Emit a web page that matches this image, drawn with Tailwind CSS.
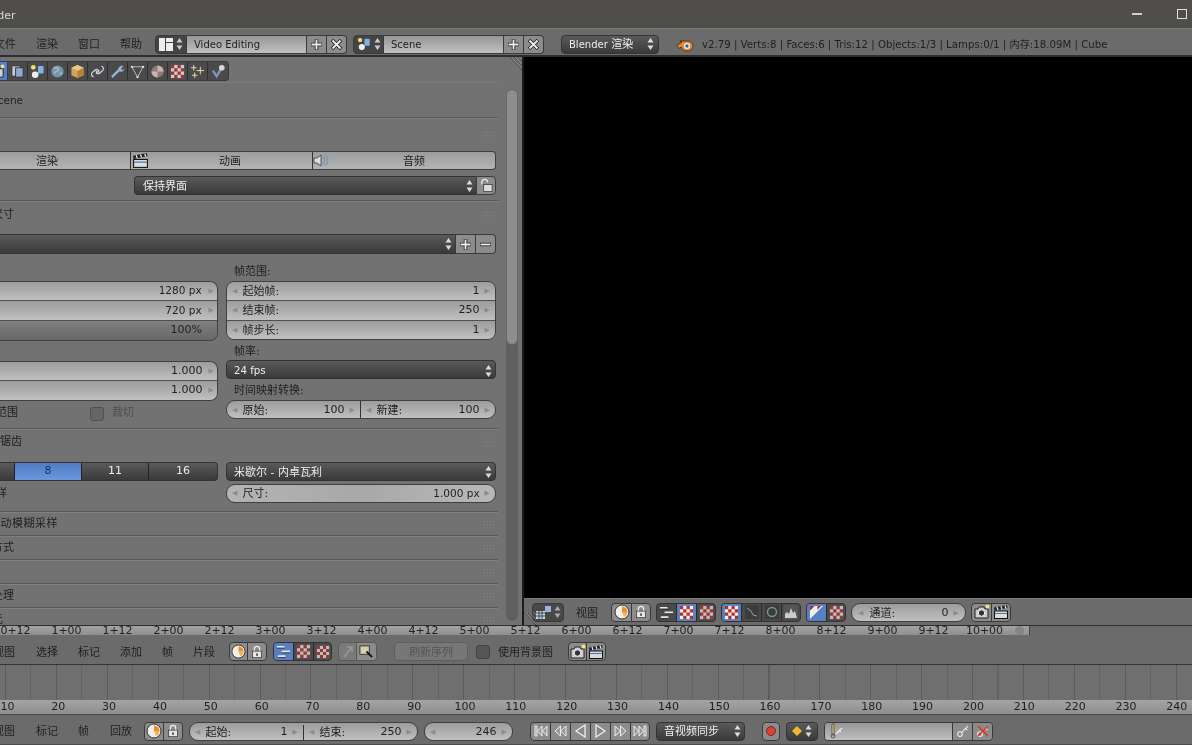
<!DOCTYPE html>
<html lang="en">
<head>
<meta charset="UTF-8" />
<title>Blender</title>
<script src="https://cdn.jsdelivr.net/npm/@tailwindcss/browser@4"></script>
</head>
<body class="bg-black">

<!-- icon sheet -->
<svg width="0" height="0" class="absolute">
  <symbol id="checker" viewBox="0 0 16 16"><rect x="1" y="1" width="14" height="14" fill="#eee"/><path fill="#b5302a" d="M1 1h3.500v3.500H1zM8 1h3.500v3.500H8zM4.500 4.500H8V8H4.500zM11.500 4.500H15V8h-3.500zM1 8h3.500v3.500H1zM8 8h3.500v3.500H8zM4.500 11.500H8V15H4.500zM11.500 11.500H15V15h-3.500z"/></symbol>
  <symbol id="pie" viewBox="0 0 16 16"><circle cx="8" cy="8" r="7" fill="#f2efe6" stroke="#333" stroke-width="1"/><path d="M8 8V2.500A5.500 5.500 0 0 1 13.500 8z" fill="#e8912c"/><path d="M8 8h5.500A5.500 5.500 0 0 1 10 13z" fill="#f0b060"/></symbol>
  <symbol id="lock" viewBox="0 0 16 16"><path d="M5 7V4.500a3 3 0 0 1 6 0V7" fill="none" stroke="#eee" stroke-width="1.500"/><rect x="3" y="7" width="10" height="7.500" fill="#e6e6e6" stroke="#333" stroke-width=".8"/><rect x="7" y="9.500" width="2" height="3" fill="#555"/></symbol>
  <symbol id="seqbars" viewBox="0 0 16 16"><path fill="#e8e8e8" d="M1 2h8v2H1zM6 7h9v2H6zM2 12h8v2H2z"/><path fill="#222" d="M1 4h8v.8H1zM6 9h9v.8H6zM2 14h8v.8H2z"/></symbol>
  <symbol id="camera" viewBox="0 0 16 16"><path d="M1 5h3l1-2h5l1 2h3v9H1z" fill="#cfcfcf" stroke="#222" stroke-width="1"/><circle cx="7.500" cy="9" r="3.200" fill="#333" stroke="#eee" stroke-width="1"/><circle cx="13.500" cy="2.500" r="2" fill="#f6e27a"/></symbol>
  <symbol id="clapper" viewBox="0 0 16 16"><rect x="1.500" y="7" width="13" height="7.500" fill="#dcdcdc" stroke="#111" stroke-width="1"/><path d="M1 3.500 14 1l.6 3L1.500 6.500z" fill="#222"/><path d="M4 3l1 3M8 2.300l1 3M12 1.500l1 3" stroke="#eee" stroke-width="1.200"/><path d="M2 9.500h12" stroke="#4a78b0"/></symbol>
  <symbol id="sceneico" viewBox="0 0 16 16"><circle cx="3.500" cy="3.500" r="2.500" fill="#e9e36a"/><rect x="8.500" y="2" width="6" height="8" rx="1" fill="#7fb2e8"/><circle cx="5.500" cy="11.500" r="3.500" fill="#eee"/></symbol>
  <symbol id="key" viewBox="0 0 16 16"><circle cx="4.500" cy="11.500" r="2.700" fill="none" stroke="#eee" stroke-width="1.200"/><path d="m6.500 9.500 7-7M11 5l2 2" stroke="#eee" stroke-width="1.200" fill="none"/></symbol>
  <symbol id="hatch" viewBox="0 0 12 13"><path d="M0 0 12 13M4 0l8 8.700M8 0l4 4.300" stroke="#444" stroke-width="1"/><path d="M1 0 12 12M5 0l7 7.600M9 0l3 3.300" stroke="#999" stroke-width=".7"/></symbol>
</svg>

<div class="w-[1192px] h-[745px] overflow-hidden flex flex-col blur-[0.35px] bg-[#727272] text-[11px] text-[#1f1f1f] font-['DejaVu_Sans','Noto_Sans_CJK_SC',sans-serif]">

  <!-- window title -->
  <div class="h-[28px] shrink-0 bg-[#4f4e4b] flex items-center justify-between">
    <span class="-ml-[27px] mt-[5px] text-[11px] text-[#d8d8d8]">Blender</span>
    <div class="flex items-center">
      <div class="w-[10px] h-[2px] bg-[#cfcfcf]"></div>
      <div class="ml-[35px] mr-[5px] w-[10px] h-[10px] border border-[#e0e0e0]"></div>
    </div>
  </div>

  <!-- info header -->
  <div class="h-[29px] shrink-0 pt-[4px] bg-[#6b6b6b] border-t border-[#7c7c7c] border-b-2 border-b-[#2e2e2e] flex items-center">
    <span class="-ml-[6px] w-[22px] mt-[3px]">文件</span>
    <span class="ml-[20px] w-[22px] mt-[3px]">渲染</span>
    <span class="ml-[20px] w-[22px] mt-[3px]">窗口</span>
    <span class="ml-[20px] w-[22px] mt-[3px]">帮助</span>
    <div class="ml-[13px] w-[32px] h-[19px] rounded-l-[4px] border border-[#3a3a3a] bg-[#444] flex items-center justify-center gap-[3px]">
      <svg class="w-[14px] h-[13px]" viewBox="0 0 14 13"><path fill="#eee" d="M0 0h6v13H0zM7 0h7v4H7zM7 5h7v8H7z"/></svg>
      <svg class="w-[7px] h-[12px]" viewBox="0 0 7 12"><path fill="#ccc" d="M3.500 0 6.500 4.500h-6zM3.500 12 .5 7.500h6z"/></svg>
    </div>
    <div class="w-[120px] h-[19px] border-y border-r border-[#3a3a3a] bg-gradient-to-b from-[#969696] to-[#c0c0c0] flex items-center pl-[7px] text-[10px]">Video Editing</div>
    <div class="w-[20px] h-[19px] border-y border-r border-[#3a3a3a] bg-[#8c8c8c] flex items-center justify-center"><svg class="w-[13px] h-[13px]" viewBox="0 0 13 13"><path d="M6.500 1v11M1 6.500h11" stroke="#222" stroke-width="3.500"/><path d="M6.500 1.500v10M1.500 6.500h10" stroke="#eee" stroke-width="1.800"/></svg></div>
    <div class="w-[20px] h-[19px] border-y border-r border-[#3a3a3a] rounded-r-[4px] bg-[#8c8c8c] flex items-center justify-center"><svg class="w-[13px] h-[13px]" viewBox="0 0 13 13"><path d="m2 2 9 9M11 2l-9 9" stroke="#222" stroke-width="3.500"/><path d="m2.500 2.500 8 8M10.500 2.500l-8 8" stroke="#eee" stroke-width="1.800"/></svg></div>

    <div class="ml-[6px] w-[31px] h-[19px] rounded-l-[4px] border border-[#3a3a3a] bg-[#444] flex items-center justify-center gap-[3px]">
      <svg class="w-[14px] h-[14px]"><use href="#sceneico"/></svg>
      <svg class="w-[7px] h-[12px]" viewBox="0 0 7 12"><path fill="#ccc" d="M3.500 0 6.500 4.500h-6zM3.500 12 .5 7.500h6z"/></svg>
    </div>
    <div class="w-[120px] h-[19px] border-y border-r border-[#3a3a3a] bg-gradient-to-b from-[#969696] to-[#c0c0c0] flex items-center pl-[7px] text-[10px]">Scene</div>
    <div class="w-[20px] h-[19px] border-y border-r border-[#3a3a3a] bg-[#8c8c8c] flex items-center justify-center"><svg class="w-[13px] h-[13px]" viewBox="0 0 13 13"><path d="M6.500 1v11M1 6.500h11" stroke="#222" stroke-width="3.500"/><path d="M6.500 1.500v10M1.500 6.500h10" stroke="#eee" stroke-width="1.800"/></svg></div>
    <div class="w-[20px] h-[19px] border-y border-r border-[#3a3a3a] rounded-r-[4px] bg-[#8c8c8c] flex items-center justify-center"><svg class="w-[13px] h-[13px]" viewBox="0 0 13 13"><path d="m2 2 9 9M11 2l-9 9" stroke="#222" stroke-width="3.500"/><path d="m2.500 2.500 8 8M10.500 2.500l-8 8" stroke="#eee" stroke-width="1.800"/></svg></div>

    <div class="ml-[17px] w-[98px] h-[19px] rounded-[4px] border border-[#333] bg-gradient-to-b from-[#5a5a5a] to-[#3a3a3a] flex items-center justify-between pl-[7px] pr-[4px] text-[#eee]"><span class="mt-[2px]"><span class="text-[10px]">Blender</span> 渲染</span>
      <svg class="w-[7px] h-[12px]" viewBox="0 0 7 12"><path fill="#ddd" d="M3.500 0 6.500 4.500h-6zM3.500 12 .5 7.500h6z"/></svg>
    </div>
    <svg class="ml-[17px] w-[18px] h-[16px]" viewBox="0 0 18 16"><path d="M1 9.500 6 6 4 5h7.500C15 5 17 7.500 17 10s-2.500 5-6 5-5.500-2-5.800-4L3 12.500z" fill="#e8862a" stroke="#3a2a1a" stroke-width=".8"/><circle cx="11" cy="10" r="3" fill="#f4f4f4"/><circle cx="11" cy="10" r="1.700" fill="#2a5fa8"/></svg>
    <span class="ml-[8px] text-[10.2px] mt-[1px]">v2.79 | Verts:8 | Faces:6 | Tris:12 | Objects:1/3 | Lamps:0/1 | 内存:18.09M | Cube</span>
  </div>

  <!-- properties + image preview -->
  <div class="h-[568px] shrink-0 flex">
    <div class="relative w-[522px] shrink-0 overflow-hidden flex">
      <svg class="absolute right-0 top-0 w-[12px] h-[13px]"><use href="#hatch"/></svg>
      <div class="w-[498px] shrink-0">
        <!-- tabs -->
        <div class="h-[26px] pt-[4px] flex border-b border-[#7c7c7c]">
          <div class="w-[8px] h-[20px] bg-[#5680c2] border-y border-r border-[#2c3f5e] overflow-hidden"><svg class="-ml-[10px] mt-[2px] w-[15px] h-[15px]"><use href="#camera"/></svg></div>
          <div class="h-[20px] flex rounded-r-[4px] border-y border-r border-[#3a3a3a] bg-[#4a4a4a] overflow-hidden">
            <div class="w-[20px] flex items-center justify-center border-r border-[#2f2f2f]"><svg class="w-[15px] h-[15px]" viewBox="0 0 16 16"><rect x="2" y="2" width="9" height="11" fill="#c9c9d9" stroke="#333"/><rect x="6" y="4" width="8" height="10" fill="#8fa9d0" stroke="#333"/></svg></div>
            <div class="w-[20px] flex items-center justify-center border-r border-[#2f2f2f]"><svg class="w-[15px] h-[15px]"><use href="#sceneico"/></svg></div>
            <div class="w-[20px] flex items-center justify-center border-r border-[#2f2f2f]"><svg class="w-[15px] h-[15px]" viewBox="0 0 16 16"><circle cx="8" cy="8" r="6.500" fill="#6f94b5"/><path d="M4 5c2-2 5-1 5 1s-4 1-4 4M10 11l3-2" stroke="#a8b8a0" stroke-width="2" fill="none"/></svg></div>
            <div class="w-[20px] flex items-center justify-center border-r border-[#2f2f2f]"><svg class="w-[15px] h-[15px]" viewBox="0 0 16 16"><path d="m8 1 6.500 3v8L8 15l-6.500-3V4z" fill="#d4a35e"/><path d="M8 8v7l6.500-3V4z" fill="#b5813f"/><path d="m8 1 6.500 3L8 7 1.500 4z" fill="#eac88c"/></svg></div>
            <div class="w-[20px] flex items-center justify-center border-r border-[#2f2f2f]"><svg class="w-[15px] h-[15px]" viewBox="0 0 16 16"><path d="M6.500 10.500 10 6.500M4 13.500c-3 0-3-4-1-5l3-2.500c2-1 4 1 3 3M12 2.500c3 0 3 4 1 5l-3 2.500c-2 1-4-1-3-3" fill="none" stroke="#c4cfdc" stroke-width="1.400"/></svg></div>
            <div class="w-[20px] flex items-center justify-center border-r border-[#2f2f2f]"><svg class="w-[15px] h-[15px]" viewBox="0 0 16 16"><path d="m2 14 7.500-7.500" stroke="#9ab4d4" stroke-width="2.500"/><path d="M9 7c-1-3 2-6 5.500-5L12 4.500l.5 1.500 1.500.5 1-2.500c1 3-3 6-6 3z" fill="#9ab4d4"/></svg></div>
            <div class="w-[20px] flex items-center justify-center border-r border-[#2f2f2f]"><svg class="w-[15px] h-[15px]" viewBox="0 0 16 16"><path d="M2 3h12L8 14z" fill="none" stroke="#ddd" stroke-width=".8"/><path fill="#eee" d="M1 2h2v2H1zM13 2h2v2h-2zM7 13h2v2H7z"/></svg></div>
            <div class="w-[20px] flex items-center justify-center border-r border-[#2f2f2f]"><svg class="w-[15px] h-[15px]" viewBox="0 0 16 16"><circle cx="8" cy="8" r="6.500" fill="#8d7a7a"/><path d="M8 8V1.500A6.500 6.500 0 0 1 14.500 8z" fill="#c9b3b3"/><path d="M8 8H1.500A6.500 6.500 0 0 0 8 14.500z" fill="#c9b3b3"/></svg></div>
            <div class="w-[20px] flex items-center justify-center border-r border-[#2f2f2f]"><svg class="w-[15px] h-[15px] opacity-80"><use href="#checker"/></svg></div>
            <div class="w-[20px] flex items-center justify-center border-r border-[#2f2f2f]"><svg class="w-[15px] h-[15px]" viewBox="0 0 16 16"><path d="M4 1v6M1 4h6M11 3v8M7 7h8M5 9v6M2 12h6" stroke="#eee0b8" stroke-width="1"/></svg></div>
            <div class="w-[20px] flex items-center justify-center"><svg class="w-[15px] h-[15px]" viewBox="0 0 16 16"><path d="m2 7 4 6 5-8" fill="none" stroke="#7d96c4" stroke-width="2.500"/><circle cx="11.500" cy="4" r="3" fill="#d8d8d8"/></svg></div>
          </div>
        </div>
        <div class="h-[34px] pt-[1px] flex items-center"><span class="-ml-[9px] text-[10.5px]">Scene</span></div>
        <div class="h-[2px] border-t border-[#585858] bg-[#808080]"></div>

        <!-- render -->
        <div class="h-[32px] flex justify-end items-center pr-[3px]"><div class="w-[12px] h-[9px] bg-[radial-gradient(#808080_1px,transparent_1px)] bg-[size:3px_3px]"></div></div>
        <div class="mr-[2px] h-[19px] flex rounded-r-[4px] border-y border-r border-[#3f3f3f] bg-gradient-to-b from-[#9c9c9c] to-[#b4b4b4] overflow-hidden">
          <div class="w-[131px] pt-[4px] border-r border-[#333] flex items-center justify-center pr-[36px]">渲染</div>
          <div class="w-[182px] border-r border-[#333] flex items-center"><svg class="ml-[1px] w-[17px] h-[17px]"><use href="#clapper"/></svg><span class="ml-[70px] mt-[4px]">动画</span></div>
          <div class="flex-1 flex items-center"><svg class="w-[17px] h-[15px]" viewBox="0 0 17 15"><path d="M1 5h3l4-3v11l-4-3H1z" fill="#ddd" stroke="#333" stroke-width=".8"/><path d="M10 4c2 2 2 5 0 7M12.500 2.500c3 3 3 7 0 10" fill="none" stroke="#6d8fc4" stroke-width="1.200"/></svg><span class="ml-[73px] mt-[4px]">音频</span></div>
        </div>
        <div class="mt-[6px] mr-[2px] h-[19px] flex justify-end">
          <div class="w-[342px] rounded-l-[4px] border-y border-l border-[#333] bg-gradient-to-b from-[#5a5a5a] to-[#3a3a3a] text-[#eee] flex items-center justify-between pl-[8px] pr-[3px]"><span class="mt-[4px]">保持界面</span><svg class="w-[7px] h-[12px]" viewBox="0 0 7 12"><path fill="#ddd" d="M3.500 0 6.500 4.500h-6zM3.500 12 .5 7.500h6z"/></svg></div>
          <div class="w-[20px] rounded-r-[4px] border border-[#3a3a3a] bg-[#8c8c8c] flex items-center justify-center"><svg class="w-[15px] h-[15px]" viewBox="0 0 16 16"><path d="M3 7V4.500a3 3 0 0 1 6 0" fill="none" stroke="#eee" stroke-width="1.300"/><rect x="5" y="7" width="9" height="7.500" fill="#ddd" stroke="#333" stroke-width=".8"/></svg></div>
        </div>
        <div class="mt-[5px] h-[2px] border-t border-[#585858] bg-[#808080]"></div>

        <!-- dimensions -->
        <div class="h-[22px] pt-[4px] flex items-center justify-between pr-[3px]"><span class="-ml-[8px]">尺寸</span><div class="w-[12px] h-[9px] bg-[radial-gradient(#808080_1px,transparent_1px)] bg-[size:3px_3px]"></div></div>
        <div class="mt-[10px] mr-[2px] h-[20px] flex">
          <div class="flex-1 border-y border-[#333] bg-gradient-to-b from-[#5a5a5a] to-[#3a3a3a] flex items-center justify-end pr-[3px]"><svg class="w-[7px] h-[12px]" viewBox="0 0 7 12"><path fill="#ddd" d="M3.500 0 6.500 4.500h-6zM3.500 12 .5 7.500h6z"/></svg></div>
          <div class="w-[21px] border border-[#3a3a3a] bg-[#8c8c8c] flex items-center justify-center"><svg class="w-[13px] h-[13px]" viewBox="0 0 13 13"><path d="M6.500 1v11M1 6.500h11" stroke="#222" stroke-width="3.500"/><path d="M6.500 1.500v10M1.500 6.500h10" stroke="#eee" stroke-width="1.800"/></svg></div>
          <div class="w-[20px] rounded-r-[4px] border-y border-r border-[#3a3a3a] bg-[#8c8c8c] flex items-center justify-center"><svg class="w-[13px] h-[13px]" viewBox="0 0 13 13"><path d="M1 6.500h11" stroke="#222" stroke-width="3.500"/><path d="M1.500 6.500h10" stroke="#eee" stroke-width="1.800"/></svg></div>
        </div>
        <div class="mr-[2px] flex gap-[8px]">
          <div class="w-[218px] shrink-0">
            <div class="mt-[27px] rounded-r-[8px] border-y border-r border-[#404040] overflow-hidden">
              <div class="h-[19px] border-b border-[#505050] bg-gradient-to-b from-[#9c9c9c] to-[#c0c0c0] flex items-center justify-end pr-[3px]"><span class="text-[10.5px]">1280 px</span><span class="ml-[7px] text-[7px] text-[#8c8c8c]">▶</span></div>
              <div class="h-[20px] border-b border-[#505050] bg-gradient-to-b from-[#9c9c9c] to-[#c0c0c0] flex items-center justify-end pr-[3px]"><span class="text-[10.5px]">720 px</span><span class="ml-[7px] text-[7px] text-[#8c8c8c]">▶</span></div>
              <div class="h-[19px] bg-gradient-to-b from-[#808080] to-[#686868] flex items-center justify-end pr-[15px]">100%</div>
            </div>
            <div class="mt-[20px] rounded-r-[8px] border-y border-r border-[#404040] overflow-hidden">
              <div class="h-[19px] border-b border-[#505050] bg-gradient-to-b from-[#9c9c9c] to-[#c0c0c0] flex items-center justify-end pr-[3px]"><span>1.000</span><span class="ml-[6px] text-[7px] text-[#8c8c8c]">▶</span></div>
              <div class="h-[19px] bg-gradient-to-b from-[#9c9c9c] to-[#c0c0c0] flex items-center justify-end pr-[3px]"><span>1.000</span><span class="ml-[6px] text-[7px] text-[#8c8c8c]">▶</span></div>
            </div>
            <div class="mt-[3px] h-[17px] pt-[2px] flex items-center">
              <span class="-ml-[15px] w-[105px]">范范围</span>
              <div class="w-[14px] h-[14px] rounded-[3px] border border-[#505050] bg-[#666]"></div>
              <span class="ml-[8px] text-[#4e4e4e]">裁切</span>
            </div>
          </div>
          <div class="flex-1">
            <div class="mt-[8px] h-[19px] pt-[2px] pl-[8px] flex items-center">帧范围:</div>
            <div class="rounded-[8px] border border-[#404040] overflow-hidden">
              <div class="h-[19px] border-b border-[#505050] bg-gradient-to-b from-[#9c9c9c] to-[#c0c0c0] flex items-center px-[5px]"><span class="text-[7px] text-[#8c8c8c]">◀</span><span class="ml-[5px] flex-1 mt-[2px]">起始帧:</span><span>1</span><span class="ml-[5px] text-[7px] text-[#8c8c8c]">▶</span></div>
              <div class="h-[20px] border-b border-[#505050] bg-gradient-to-b from-[#9c9c9c] to-[#c0c0c0] flex items-center px-[5px]"><span class="text-[7px] text-[#8c8c8c]">◀</span><span class="ml-[5px] flex-1 mt-[2px]">结束帧:</span><span>250</span><span class="ml-[5px] text-[7px] text-[#8c8c8c]">▶</span></div>
              <div class="h-[18px] bg-gradient-to-b from-[#9c9c9c] to-[#c0c0c0] flex items-center px-[5px]"><span class="text-[7px] text-[#8c8c8c]">◀</span><span class="ml-[5px] flex-1 mt-[2px]">帧步长:</span><span>1</span><span class="ml-[5px] text-[7px] text-[#8c8c8c]">▶</span></div>
            </div>
            <div class="h-[20px] pt-[4px] pl-[8px] flex items-center">帧率:</div>
            <div class="h-[19px] pt-[2px] rounded-[4px] border border-[#333] bg-gradient-to-b from-[#5a5a5a] to-[#3a3a3a] text-[#eee] flex items-center justify-between pl-[7px] pr-[3px] text-[10.2px]">24 fps<svg class="w-[7px] h-[12px]" viewBox="0 0 7 12"><path fill="#ddd" d="M3.500 0 6.500 4.500h-6zM3.500 12 .5 7.500h6z"/></svg></div>
            <div class="h-[21px] pt-[4px] pl-[8px] flex items-center">时间映射转换:</div>
            <div class="h-[19px] flex rounded-[9px] border border-[#404040] bg-gradient-to-b from-[#9c9c9c] to-[#c0c0c0] overflow-hidden">
              <div class="w-[134px] pt-[2px] border-r border-[#333] flex items-center px-[5px]"><span class="text-[7px] text-[#8c8c8c]">◀</span><span class="ml-[5px] flex-1 mt-[2px]">原始:</span><span>100</span><span class="ml-[5px] text-[7px] text-[#8c8c8c]">▶</span></div>
              <div class="flex-1 pt-[2px] flex items-center px-[5px]"><span class="text-[7px] text-[#8c8c8c]">◀</span><span class="ml-[5px] flex-1 mt-[2px]">新建:</span><span>100</span><span class="ml-[5px] text-[7px] text-[#8c8c8c]">▶</span></div>
            </div>
          </div>
        </div>
        <div class="mt-[7px] h-[2px] border-t border-[#585858] bg-[#808080]"></div>

        <!-- anti-aliasing -->
        <div class="h-[22px] pt-[2px] flex items-center justify-between pr-[3px]"><span class="-ml-[11px]">抗锯齿</span><div class="w-[12px] h-[9px] bg-[radial-gradient(#808080_1px,transparent_1px)] bg-[size:3px_3px]"></div></div>
        <div class="mt-[10px] mr-[2px] flex gap-[8px]">
          <div class="w-[218px] h-[19px] shrink-0 flex rounded-r-[4px] border-y border-r border-[#333] bg-gradient-to-b from-[#5a5a5a] to-[#3a3a3a] text-[#eee] overflow-hidden">
            <div class="w-[15px] border-r border-[#222]"></div>
            <div class="w-[67px] border-r border-[#222] bg-gradient-to-b from-[#4f7cc4] to-[#6a96dc] text-[#12305f] flex items-center justify-center">8</div>
            <div class="w-[67px] border-r border-[#222] flex items-center justify-center">11</div>
            <div class="flex-1 flex items-center justify-center">16</div>
          </div>
          <div class="flex-1 h-[19px] rounded-[4px] border border-[#333] bg-gradient-to-b from-[#5a5a5a] to-[#3a3a3a] text-[#eee] flex items-center justify-between pl-[7px] pr-[3px]"><span class="mt-[4px]">米歇尔 - 内卓瓦利</span><svg class="w-[7px] h-[12px]" viewBox="0 0 7 12"><path fill="#ddd" d="M3.500 0 6.500 4.500h-6zM3.500 12 .5 7.500h6z"/></svg></div>
        </div>
        <div class="mt-[3px] mr-[2px] flex gap-[8px]">
          <div class="w-[218px] shrink-0 pt-[2px] flex items-center"><span class="-ml-[15px]">采样</span></div>
          <div class="flex-1 h-[19px] rounded-[9px] border border-[#404040] bg-gradient-to-r from-[#b4b4b4] via-[#a8a8a8] to-[#b8b8b8] flex items-center px-[5px]"><span class="text-[7px] text-[#8c8c8c]">◀</span><span class="ml-[5px] flex-1 mt-[2px]">尺寸:</span><span class="text-[10.5px]">1.000 px</span><span class="ml-[5px] text-[7px] text-[#8c8c8c]">▶</span></div>
        </div>
        <div class="mt-[8px] h-[2px] border-t border-[#585858] bg-[#808080]"></div>

        <!-- collapsed panels -->
        <div class="h-[22px] flex items-center justify-between pr-[3px]"><span class="-ml-[11px] tracking-[0.5px] whitespace-nowrap">运动模糊采样</span><div class="w-[12px] h-[9px] bg-[radial-gradient(#808080_1px,transparent_1px)] bg-[size:3px_3px]"></div></div>
        <div class="h-[2px] border-t border-[#585858] bg-[#808080]"></div>
        <div class="h-[22px] flex items-center justify-between pr-[3px]"><span class="-ml-[8px]">方式</span><div class="w-[12px] h-[9px] bg-[radial-gradient(#808080_1px,transparent_1px)] bg-[size:3px_3px]"></div></div>
        <div class="h-[2px] border-t border-[#585858] bg-[#808080]"></div>
        <div class="h-[22px] flex items-center justify-end pr-[3px]"><div class="w-[12px] h-[9px] bg-[radial-gradient(#808080_1px,transparent_1px)] bg-[size:3px_3px]"></div></div>
        <div class="h-[2px] border-t border-[#585858] bg-[#808080]"></div>
        <div class="h-[22px] flex items-center justify-between pr-[3px]"><span class="-ml-[8px]">处理</span><div class="w-[12px] h-[9px] bg-[radial-gradient(#808080_1px,transparent_1px)] bg-[size:3px_3px]"></div></div>
        <div class="h-[2px] border-t border-[#585858] bg-[#808080]"></div>
        <div class="h-[16px] flex items-center justify-between pr-[3px]"><span class="-ml-[8px] mt-[6px]">元</span><div class="w-[12px] h-[9px] mt-[6px] bg-[radial-gradient(#808080_1px,transparent_1px)] bg-[size:3px_3px]"></div></div>
      </div>
      <!-- scrollbar -->
      <div class="ml-[8px] mt-[32px] mb-[4px] w-[12px] rounded-[6px] bg-[#5f5f5f]">
        <div class="h-[256px] rounded-[6px] bg-[#8e8e8e] border border-[#666]"></div>
      </div>
    </div>

    <div class="flex-1 flex flex-col border-l-2 border-[#1c1c1c]">
      <div class="flex-1 bg-black"></div>
      <!-- image editor header -->
      <div class="relative h-[27px] shrink-0 bg-[#6b6b6b] border-t border-[#7c7c7c] flex items-center">
        <svg class="absolute left-0 bottom-0 w-[12px] h-[13px]"><use href="#hatch"/></svg>
        <div class="ml-[8px] w-[32px] h-[19px] rounded-[4px] border border-[#3a3a3a] bg-[#484848] flex items-center justify-center gap-[2px]"><svg class="w-[17px] h-[15px]" viewBox="0 0 17 15"><rect x="1" y="6" width="9" height="8" fill="#cfd8e6"/><path d="M1 8h9M1 11h9M4 6v8M7 6v8" stroke="#345"/><path d="M10 1h6v6h-6z" fill="#9db4d8"/></svg><svg class="w-[7px] h-[12px]" viewBox="0 0 7 12"><path fill="#aaa" d="M3.500 0 6.500 4.500h-6zM3.500 12 .5 7.500h6z"/></svg></div>
        <span class="ml-[12px] w-[22px] mt-[4px]">视图</span>
        <div class="ml-[13px] h-[19px] flex rounded-[4px] border border-[#3a3a3a] bg-[#8c8c8c] overflow-hidden">
          <div class="w-[20px] border-r border-[#3a3a3a] flex items-center justify-center"><svg class="w-[16px] h-[16px]"><use href="#pie"/></svg></div>
          <div class="w-[18px] flex items-center justify-center"><svg class="w-[14px] h-[14px]"><use href="#lock"/></svg></div>
        </div>
        <div class="ml-[5px] h-[19px] flex rounded-[4px] border border-[#333] bg-[#4a4a4a] overflow-hidden">
          <div class="w-[20px] border-r border-[#2a2a2a] flex items-center justify-center"><svg class="w-[15px] h-[15px]"><use href="#seqbars"/></svg></div>
          <div class="w-[20px] border-r border-[#2a2a2a] bg-[#5680c2] flex items-center justify-center"><svg class="w-[15px] h-[15px]"><use href="#checker"/></svg></div>
          <div class="w-[18px] flex items-center justify-center"><svg class="w-[15px] h-[15px] opacity-70"><use href="#checker"/></svg></div>
        </div>
        <div class="ml-[5px] h-[19px] flex rounded-[4px] border border-[#333] bg-[#4a4a4a] overflow-hidden">
          <div class="w-[20px] border-r border-[#2a2a2a] bg-[#5680c2] flex items-center justify-center"><svg class="w-[15px] h-[15px]"><use href="#checker"/></svg></div>
          <div class="w-[20px] border-r border-[#2a2a2a] flex items-center justify-center"><svg class="w-[14px] h-[14px]" viewBox="0 0 14 14"><rect width="14" height="14" fill="#3c3c3c"/><path d="m2 3 4 3 2 4 4 1" fill="none" stroke="#8fa0a8"/></svg></div>
          <div class="w-[20px] border-r border-[#2a2a2a] flex items-center justify-center"><svg class="w-[14px] h-[14px]" viewBox="0 0 14 14"><rect width="14" height="14" fill="#3c3c3c"/><circle cx="7" cy="7" r="4.500" fill="none" stroke="#6a9a8a" stroke-width="1.500"/></svg></div>
          <div class="w-[18px] flex items-center justify-center"><svg class="w-[14px] h-[14px]" viewBox="0 0 14 14"><rect width="14" height="14" fill="#555"/><path d="M1 13V9l2-2 2 2 2-6 2 5 2-2 2 7z" fill="#ccc"/></svg></div>
        </div>
        <div class="ml-[5px] h-[19px] flex rounded-[4px] border border-[#333] bg-[#4a4a4a] overflow-hidden">
          <div class="w-[20px] border-r border-[#2a2a2a] bg-[#5680c2] flex items-center justify-center"><svg class="w-[15px] h-[15px]" viewBox="0 0 16 16"><path d="M1 1h14L1 15z" fill="#eee"/><path d="M1 1h5L1 6zM9 1h4l-4 4z" fill="#b5302a"/></svg></div>
          <div class="w-[18px] flex items-center justify-center"><svg class="w-[15px] h-[15px] opacity-70"><use href="#checker"/></svg></div>
        </div>
        <div class="ml-[5px] w-[115px] h-[19px] pt-[2px] rounded-[9px] border border-[#404040] bg-gradient-to-b from-[#9c9c9c] to-[#c0c0c0] flex items-center px-[6px]"><span class="text-[7px] text-[#8c8c8c]">◀</span><span class="ml-[6px] flex-1 mt-[2px]">通道:</span><span>0</span><span class="ml-[5px] text-[7px] text-[#8c8c8c]">▶</span></div>
        <div class="ml-[5px] h-[19px] flex rounded-[4px] border border-[#3a3a3a] bg-[#8c8c8c] overflow-hidden">
          <div class="w-[20px] border-r border-[#3a3a3a] flex items-center justify-center"><svg class="w-[16px] h-[16px]"><use href="#camera"/></svg></div>
          <div class="w-[18px] flex items-center justify-center"><svg class="w-[16px] h-[16px]"><use href="#clapper"/></svg></div>
        </div>
      </div>
    </div>
  </div>

  <!-- sequencer ruler -->
  <div class="h-[13px] shrink-0 overflow-hidden border-t border-[#2e2e2e] bg-[#6b6b6b]">
    <div class="relative w-[1030px] h-[11px] overflow-hidden border-r border-[#444] bg-gradient-to-b from-[#a8a8a8] to-[#8e8e8e] flex -mt-[2px] leading-[14px] text-[#222]">
      <div class="-ml-[10px] flex">
        <span class="w-[51px] text-center">0+12</span><span class="w-[51px] text-center">1+00</span><span class="w-[51px] text-center">1+12</span><span class="w-[51px] text-center">2+00</span><span class="w-[51px] text-center">2+12</span><span class="w-[51px] text-center">3+00</span><span class="w-[51px] text-center">3+12</span><span class="w-[51px] text-center">4+00</span><span class="w-[51px] text-center">4+12</span><span class="w-[51px] text-center">5+00</span><span class="w-[51px] text-center">5+12</span><span class="w-[51px] text-center">6+00</span><span class="w-[51px] text-center">6+12</span><span class="w-[51px] text-center">7+00</span><span class="w-[51px] text-center">7+12</span><span class="w-[51px] text-center">8+00</span><span class="w-[51px] text-center">8+12</span><span class="w-[51px] text-center">9+00</span><span class="w-[51px] text-center">9+12</span><span class="w-[51px] text-center">10+00</span>
      </div>
      <div class="absolute right-[5px] top-[2px] w-[9px] h-[9px] rounded-full bg-[#858585]"></div>
    </div>
  </div>

  <!-- sequencer header -->
  <div class="h-[27px] shrink-0 pt-[1px] bg-[#6b6b6b] border-b border-[#333] flex items-center">
    <span class="-ml-[7px] w-[22px] mt-[3px]">视图</span>
    <span class="ml-[21px] w-[22px] mt-[3px]">选择</span>
    <span class="ml-[20px] w-[22px] mt-[3px]">标记</span>
    <span class="ml-[20px] w-[22px] mt-[3px]">添加</span>
    <span class="ml-[20px] w-[11px] mt-[3px]">帧</span>
    <span class="ml-[20px] w-[22px] mt-[3px]">片段</span>
    <div class="ml-[14px] h-[19px] flex rounded-[4px] border border-[#3a3a3a] bg-[#8c8c8c] overflow-hidden">
      <div class="w-[18px] border-r border-[#3a3a3a] flex items-center justify-center"><svg class="w-[15px] h-[15px]"><use href="#pie"/></svg></div>
      <div class="w-[18px] flex items-center justify-center"><svg class="w-[14px] h-[14px]"><use href="#lock"/></svg></div>
    </div>
    <div class="ml-[6px] h-[19px] flex rounded-[4px] border border-[#333] bg-[#4a4a4a] overflow-hidden">
      <div class="w-[20px] border-r border-[#2a2a2a] bg-[#5680c2] flex items-center justify-center"><svg class="w-[15px] h-[15px]"><use href="#seqbars"/></svg></div>
      <div class="w-[20px] border-r border-[#2a2a2a] flex items-center justify-center"><svg class="w-[15px] h-[15px] opacity-70"><use href="#checker"/></svg></div>
      <div class="w-[17px] flex items-center justify-center"><svg class="w-[14px] h-[14px] opacity-70"><use href="#checker"/></svg></div>
    </div>
    <div class="ml-[6px] h-[19px] flex rounded-[4px] border border-[#5a5a5a] bg-[#7a7a7a] overflow-hidden">
      <div class="w-[18px] border-r border-[#555] flex items-center justify-center"><svg class="w-[14px] h-[14px]" viewBox="0 0 14 14"><path d="M3 12 11 2M6 2h5v5" fill="none" stroke="#999" stroke-width="1.500"/></svg></div>
      <div class="w-[19px] bg-[#8c8c8c] flex items-center justify-center"><svg class="w-[15px] h-[15px]" viewBox="0 0 16 16"><rect x="1" y="2" width="10" height="9" fill="#d8cfa8" stroke="#333"/><path d="m8 8 6 6" stroke="#111" stroke-width="2"/></svg></div>
    </div>
    <div class="ml-[17px] w-[74px] h-[19px] pt-[3px] rounded-[4px] border border-[#5e5e5e] bg-[#777] text-[#545454] flex items-center justify-center">刷新序列</div>
    <div class="ml-[8px] w-[14px] h-[14px] rounded-[3px] border border-[#444] bg-[#555]"></div>
    <span class="ml-[8px] w-[55px] mt-[3px] whitespace-nowrap">使用背景图</span>
    <div class="ml-[15px] h-[19px] flex rounded-[4px] border border-[#3a3a3a] bg-[#8c8c8c] overflow-hidden">
      <div class="w-[18px] border-r border-[#3a3a3a] flex items-center justify-center"><svg class="w-[16px] h-[16px]"><use href="#camera"/></svg></div>
      <div class="w-[18px] flex items-center justify-center"><svg class="w-[16px] h-[16px]"><use href="#clapper"/></svg></div>
    </div>
  </div>

  <!-- timeline -->
  <div class="h-[35px] shrink-0 bg-[#6f6f6f] bg-[repeating-linear-gradient(90deg,transparent_0,transparent_5px,#5c5c5c_5px,#5c5c5c_6px,transparent_6px,transparent_30.4px,#636363_30.4px,#636363_31.4px,transparent_31.4px,transparent_50.9px)]"></div>
  <div class="h-[14px] shrink-0 overflow-hidden bg-gradient-to-b from-[#a4a4a4] to-[#8e8e8e] leading-[14px]">
    <div class="-ml-[18px] grid grid-cols-[repeat(24,50.85px)] text-center">
      <span>10</span><span>20</span><span>30</span><span>40</span><span>50</span><span>60</span><span>70</span><span>80</span><span>90</span><span>100</span><span>110</span><span>120</span><span>130</span><span>140</span><span>150</span><span>160</span><span>170</span><span>180</span><span>190</span><span>200</span><span>210</span><span>220</span><span>230</span><span>240</span>
    </div>
  </div>

  <!-- timeline header -->
  <div class="flex-1 pt-[3px] bg-[#6b6b6b] border-y border-[#4c4c4c] flex items-center">
    <span class="-ml-[7px] w-[22px] mt-[3px]">视图</span>
    <span class="ml-[21px] w-[22px] mt-[3px]">标记</span>
    <span class="ml-[20px] w-[11px] mt-[3px]">帧</span>
    <span class="ml-[21px] w-[22px] mt-[3px]">回放</span>
    <div class="ml-[12px] h-[19px] flex rounded-[4px] border border-[#3a3a3a] bg-[#8c8c8c] overflow-hidden">
      <div class="w-[19px] border-r border-[#3a3a3a] flex items-center justify-center"><svg class="w-[16px] h-[16px]"><use href="#pie"/></svg></div>
      <div class="w-[18px] flex items-center justify-center"><svg class="w-[14px] h-[14px]"><use href="#lock"/></svg></div>
    </div>
    <div class="ml-[6px] w-[229px] h-[19px] pt-[2px] flex rounded-[9px] border border-[#404040] bg-gradient-to-b from-[#9c9c9c] to-[#c0c0c0] overflow-hidden">
      <div class="w-[114px] border-r border-[#333] flex items-center px-[5px]"><span class="text-[7px] text-[#8c8c8c]">◀</span><span class="ml-[5px] flex-1 mt-[2px]">起始:</span><span>1</span><span class="ml-[5px] text-[7px] text-[#8c8c8c]">▶</span></div>
      <div class="flex-1 flex items-center px-[5px]"><span class="text-[7px] text-[#8c8c8c]">◀</span><span class="ml-[5px] flex-1 mt-[2px]">结束:</span><span>250</span><span class="ml-[5px] text-[7px] text-[#8c8c8c]">▶</span></div>
    </div>
    <div class="ml-[6px] w-[89px] h-[19px] pt-[2px] rounded-[9px] border border-[#404040] bg-gradient-to-b from-[#9c9c9c] to-[#c0c0c0] flex items-center px-[5px]"><span class="text-[7px] text-[#8c8c8c] flex-1">◀</span><span>246</span><span class="ml-[5px] text-[7px] text-[#8c8c8c]">▶</span></div>
    <div class="ml-[17px] h-[19px] flex rounded-[4px] border border-[#3a3a3a] bg-[#8c8c8c] overflow-hidden">
      <div class="w-[20px] border-r border-[#3a3a3a] flex items-center justify-center"><svg class="w-[14px] h-[12px]" viewBox="0 0 14 12"><path d="M1 1h2v10H1zM8 1v10L3.500 6zM13 1v10L8.500 6z" fill="#999" stroke="#eee" stroke-width="1"/></svg></div>
      <div class="w-[20px] border-r border-[#3a3a3a] flex items-center justify-center"><svg class="w-[13px] h-[12px]" viewBox="0 0 13 12"><path d="M6.500 1v10L1 6zM12 1v10L6.500 6z" fill="#999" stroke="#eee" stroke-width="1"/></svg></div>
      <div class="w-[20px] border-r border-[#3a3a3a] flex items-center justify-center"><svg class="w-[13px] h-[14px]" viewBox="0 0 13 14"><path d="M11 1v12L2 7z" fill="#888" stroke="#eee" stroke-width="1.300"/></svg></div>
      <div class="w-[20px] border-r border-[#3a3a3a] flex items-center justify-center"><svg class="w-[13px] h-[14px]" viewBox="0 0 13 14"><path d="M2 1v12l9-6z" fill="#888" stroke="#eee" stroke-width="1.300"/></svg></div>
      <div class="w-[20px] border-r border-[#3a3a3a] flex items-center justify-center"><svg class="w-[13px] h-[12px]" viewBox="0 0 13 12"><path d="M1 1v10l5.500-5zM6.500 1v10L12 6z" fill="#999" stroke="#eee" stroke-width="1"/></svg></div>
      <div class="w-[18px] flex items-center justify-center"><svg class="w-[14px] h-[12px]" viewBox="0 0 14 12"><path d="M1 1v10l4.500-5zM6 1v10l4.500-5zM11 1h2v10h-2z" fill="#999" stroke="#eee" stroke-width="1"/></svg></div>
    </div>
    <div class="ml-[6px] w-[89px] h-[19px] rounded-[4px] border border-[#333] bg-gradient-to-b from-[#5a5a5a] to-[#3a3a3a] text-[#eee] flex items-center justify-between pl-[7px] pr-[3px]"><span class="mt-[3px]">音视频同步</span><svg class="w-[7px] h-[12px]" viewBox="0 0 7 12"><path fill="#ddd" d="M3.500 0 6.500 4.500h-6zM3.500 12 .5 7.500h6z"/></svg></div>
    <div class="ml-[17px] w-[18px] h-[19px] rounded-[4px] border border-[#3a3a3a] bg-[#8c8c8c] flex items-center justify-center"><div class="w-[10px] h-[10px] rounded-full border border-[#822] bg-[#d8442f]"></div></div>
    <div class="ml-[6px] w-[32px] h-[19px] rounded-[4px] border border-[#333] bg-gradient-to-b from-[#5a5a5a] to-[#3a3a3a] flex items-center justify-center gap-[3px]"><svg class="w-[10px] h-[10px]" viewBox="0 0 10 10"><path d="M5 0 10 5 5 10 0 5z" fill="#f2b632"/></svg><svg class="w-[7px] h-[12px]" viewBox="0 0 7 12"><path fill="#ddd" d="M3.500 0 6.500 4.500h-6zM3.500 12 .5 7.500h6z"/></svg></div>
    <div class="ml-[6px] h-[19px] flex rounded-[4px] border border-[#3a3a3a] overflow-hidden">
      <div class="w-[128px] border-r border-[#3a3a3a] bg-gradient-to-b from-[#969696] to-[#c0c0c0] flex items-center pl-[2px]"><svg class="w-[17px] h-[16px]" viewBox="0 0 17 16"><path d="M5 1h2v11H5z" fill="#ead28a" stroke="#333" stroke-width=".7"/><circle cx="6" cy="13" r="2" fill="none" stroke="#555"/><path d="m9 11 6-6M12 7l2 2" stroke="#eee" stroke-width="1.200"/></svg></div>
      <div class="w-[20px] border-r border-[#3a3a3a] bg-[#8c8c8c] flex items-center justify-center"><svg class="w-[14px] h-[14px]"><use href="#key"/></svg></div>
      <div class="w-[19px] bg-[#8c8c8c] flex items-center justify-center relative"><svg class="w-[14px] h-[14px]"><use href="#key"/></svg><svg class="w-[14px] h-[14px] absolute" viewBox="0 0 14 14"><path d="m2 2 10 10M12 2 2 12" stroke="#d8382f" stroke-width="1.600"/></svg></div>
    </div>
  </div>
</div>
</body>
</html>
